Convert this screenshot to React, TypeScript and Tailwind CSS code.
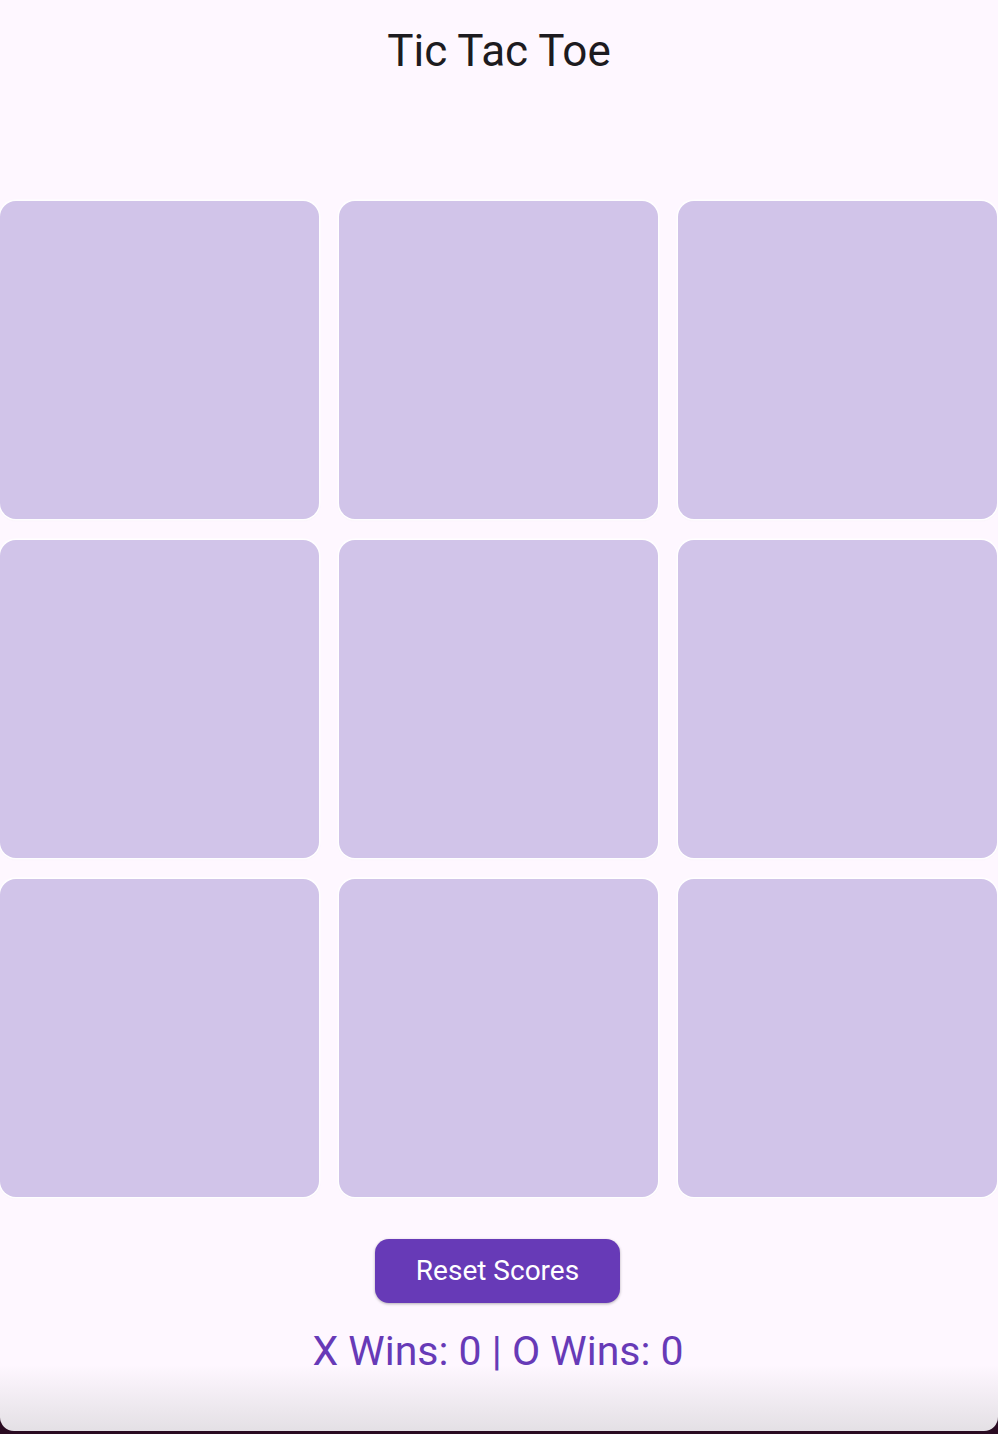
const cells = Array.from({ length: 9 }, (_, i) => i)

export default function App() {
  return (
    <div className="h-[1434px] w-[998px] bg-[#2a0b22]" style={{ fontFamily: "Roboto, 'Noto Sans', sans-serif" }}>
      <div className="flex h-[1431px] flex-col overflow-hidden rounded-b-[14px] bg-[linear-gradient(to_bottom,#fef7ff_0px,#fef7ff_1365px,#e4e0e5_1431px)]">
        <h1 className="pt-[25px] text-center text-[44px] leading-[52px] text-[#1d1b20]">Tic Tac Toe</h1>

        <div className="mt-[124px] grid w-[997px] grid-cols-3 gap-x-[20px] gap-y-[21px]">
          {cells.map((c) => (
            <button
              key={c}
              className="h-[318px] rounded-[16px] bg-[#d1c4e9] shadow-[0_0_0_1.5px_rgba(255,255,255,0.9),0_1px_3px_rgba(0,0,0,0.05)]"
            />
          ))}
        </div>

        <div className="mt-[42px] flex justify-center pr-[3px]">
          <button className="h-[64px] w-[245px] rounded-[14px] bg-[#673ab7] text-[28px] text-white shadow-[0_1px_3px_rgba(0,0,0,0.3)]">
            Reset Scores
          </button>
        </div>

        <p className="mt-[22px] pr-[2px] text-center text-[41px] leading-[52px] text-[#673ab7]">X Wins: 0 | O Wins: 0</p>
      </div>
    </div>
  )
}
